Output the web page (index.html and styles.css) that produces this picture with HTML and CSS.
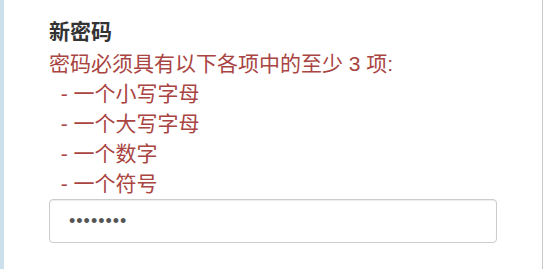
FILE: index.html
```html
<!doctype html>
<html>
<head>
  <meta charset="utf-8">
  <link rel="stylesheet" href="styles.css">
</head>
<body>
  <div class="panel">
    <div class="field">
      <label class="label" for="newPassword">新密码</label>
      <div class="hint">
        <div>密码必须具有以下各项中的至少 3 项:</div>
        <div>&nbsp;&nbsp;- 一个小写字母</div>
        <div>&nbsp;&nbsp;- 一个大写字母</div>
        <div>&nbsp;&nbsp;- 一个数字</div>
        <div>&nbsp;&nbsp;- 一个符号</div>
      </div>
      <input id="newPassword" class="input" type="password" value="12345678">
    </div>
  </div>
</body>
</html>
```

FILE: styles.css
```css
body{
  margin: 0;
  background: #cddfea;
  font-family: "Liberation Sans", "Noto Sans CJK SC", sans-serif;
}
.panel{
  margin-left: 4px;
  height: 269px;
  background: #ffffff;
  border-right: 1px solid #c8c8c8;
  padding: 17px 0 0 45px;
  box-sizing: border-box;
}
.field{
  display: flex;
  flex-direction: column;
  align-items: flex-start;
}
.label{
  font-size: 21px;
  line-height: 30px;
  font-weight: bold;
  color: #333333;
  margin-bottom: 2px;
}
.hint{
  font-size: 21px;
  line-height: 30px;
  color: #a94442;
}
.input{
  width: 448px;
  height: 44px;
  box-sizing: border-box;
  border: 1px solid #cccccc;
  border-radius: 4px;
  padding: 0 19px;
  font-family: "Liberation Sans", sans-serif;
  font-size: 18px;
  letter-spacing: 1px;
  color: #555555;
  outline: none;
  box-shadow: inset 0 1px 1px rgba(0,0,0,.075);
}
```
